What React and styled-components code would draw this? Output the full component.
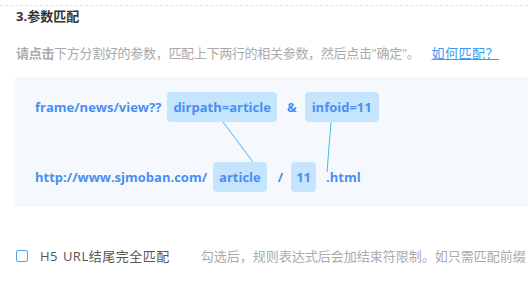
import React from 'react';
import styled, { createGlobalStyle } from 'styled-components';

const GlobalStyle = createGlobalStyle`
  html, body {
    margin: 0;
    padding: 0;
    background: #fff;
  }
  body {
    font-family: "Open Sans", "Noto Sans CJK SC", sans-serif;
    font-size: 13px;
  }
`;

const Page = styled.div`
  width: 528px;
  height: 295px;
  overflow: hidden;
  padding-top: 5px;
  box-sizing: border-box;
`;

const Divider = styled.div`
  border-top: 1px dashed #e2e2e2;
`;

const Section = styled.div`
  padding-left: 16px;
`;

const Title = styled.h3`
  margin: 0;
  font-size: 13px;
  line-height: 16px;
  padding-top: 2px;
  font-weight: bold;
  color: #333;
`;

const Desc = styled.p`
  margin: 20px 0 0;
  font-size: 13px;
  line-height: 18px;
  color: #aaa;
  white-space: nowrap;
  letter-spacing: -0.3px;

  b {
    font-weight: bold;
  }
`;

const HelpLink = styled.a`
  margin-left: 12px;
  color: #3a9af5;
  text-decoration: underline;
  letter-spacing: 0.5px;
  cursor: pointer;
`;

const Panel = styled.div`
  position: relative;
  margin: 15px 0 0 -1px;
  padding: 15px 0 15px 20px;
  background: #f5f9fe;
  display: flex;
  flex-direction: column;
  gap: 40px;
`;

const Row = styled.div`
  display: flex;
  align-items: center;
  height: 30px;
  color: #4a8ff0;
  font-weight: bold;
  font-size: 13px;
  white-space: nowrap;
  position: relative;
  z-index: 1;
`;

const Tag = styled.span`
  display: inline-flex;
  align-items: center;
  height: 30px;
  padding: 0 ${p => p.$px || 6}px;
  margin-left: ${p => p.$ml || 0}px;
  border-radius: 4px;
  background: #c5e4fd;
`;

const Sep = styled.span`
  margin: 0 ${p => p.$mr}px 0 ${p => p.$ml}px;
`;

const Lines = styled.svg`
  position: absolute;
  left: 0;
  top: 0;
  width: 100%;
  height: 100%;
  pointer-events: none;
  z-index: 2;
`;

const Option = styled.div`
  display: flex;
  align-items: center;
  margin-top: 39px;
  white-space: nowrap;
`;

const Check = styled.span`
  width: 10px;
  height: 10px;
  border: 1px solid #4aa0f7;
  border-radius: 2px;
  background: #fff;
`;

const Label = styled.span`
  margin-left: 12px;
  color: #555;
  font-size: 13px;
  word-spacing: 1px;
  letter-spacing: 0.5px;
`;

const Hint = styled.span`
  margin-left: 31px;
  color: #aaa;
  font-size: 13px;
`;

const App = () => {
  return (
    <Page>
      <GlobalStyle />
      <Divider />
      <Section>
        <Title>3.参数匹配</Title>
        <Desc>
          <b>请点击</b>下方分割好的参数，匹配上下两行的相关参数，然后点击"确定"。
          <HelpLink>如何匹配？</HelpLink>
        </Desc>
        <Panel>
          <Row>
            frame/news/view??
            <Tag $ml={6}>dirpath=article</Tag>
            <Sep $ml={10} $mr={8}>&amp;</Sep>
            <Tag $px={7}>infoid=11</Tag>
          </Row>
          <Row>
            http://www.sjmoban.com/
            <Tag $ml={6}>article</Tag>
            <Sep $ml={11} $mr={8}>/</Sep>
            <Tag $px={5}>11</Tag>
            <Sep $ml={10} $mr={0}>.html</Sep>
          </Row>
          <Lines>
            <line x1="208" y1="45" x2="238" y2="85" stroke="#4fb4f0" strokeWidth="1" />
            <line x1="316" y1="45" x2="312" y2="95" stroke="#4fb4f0" strokeWidth="1" />
          </Lines>
        </Panel>
        <Option>
          <Check />
          <Label>H5 URL结尾完全匹配</Label>
          <Hint>勾选后，规则表达式后会加结束符限制。如只需匹配前缀</Hint>
        </Option>
      </Section>
    </Page>
  );
};

export default App;
